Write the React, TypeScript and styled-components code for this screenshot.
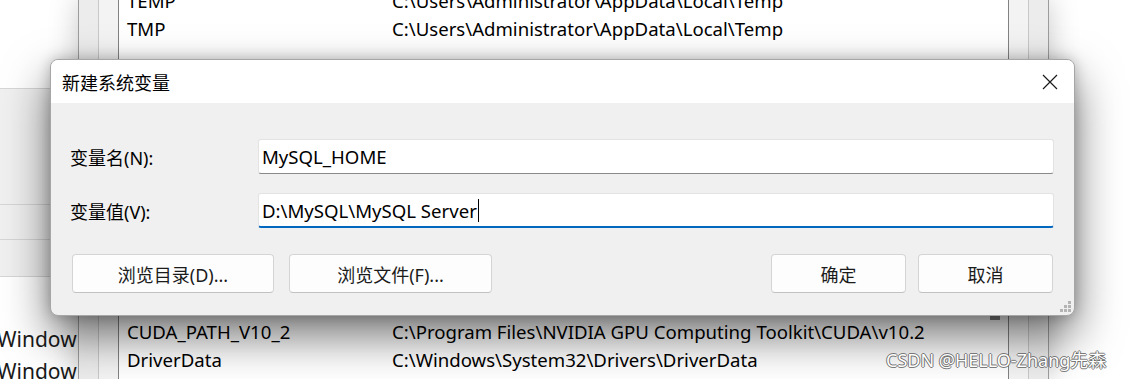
import React from 'react';
import styled, { createGlobalStyle } from 'styled-components';

const Global = createGlobalStyle`
  html, body { margin: 0; padding: 0; background: #ffffff; }
  body { font-family: "Noto Sans", "Noto Sans CJK SC", sans-serif; }
  * { box-sizing: border-box; }
`;

const Stage = styled.div`
  position: relative;
  width: 1130px;
  height: 379px;
  overflow: hidden;
  background: #ffffff;
  display: flex;
`;

/* ---------- far-left window behind ---------- */
const BackWindow = styled.div`
  width: 78px;
  flex: none;
  display: flex;
  flex-direction: column;
  background: #ffffff;
`;

const BackPane = styled.div<{ $h: number; $bg: string }>`
  height: ${p => p.$h}px;
  flex: none;
  background: ${p => p.$bg};
  border-bottom: 1px solid #d6d6d6;
`;

const BackList = styled.div`
  flex: 1;
  display: flex;
  flex-direction: column;
  justify-content: flex-end;
  margin-bottom: -8px;
`;

const BackItem = styled.div`
  height: 32px;
  line-height: 32px;
  margin-left: -3px;
  font-size: 21px;
  color: #1a1a1a;
  white-space: nowrap;
`;

/* ---------- environment window behind ---------- */
const EnvFrame = styled.div`
  width: 971px;
  flex: none;
  display: flex;
  border-left: 1px solid #9c9c9c;
  border-right: 1px solid #9c9c9c;
  box-shadow: 0 0 28px rgba(0, 0, 0, 0.22);
  background: #f0f0f0;
  z-index: 1;
`;

const Band = styled.div<{ $line?: boolean; $bg: string }>`
  width: ${p => (p.$line ? 20 : 19)}px;
  flex: none;
  background: ${p => p.$bg};
  border-right: ${p => (p.$line ? '1px solid #c8c8c8' : 'none')};
`;

const ListBox = styled.div`
  width: 891px;
  flex: none;
  display: flex;
  background: #ffffff;
  border-left: 1px solid #828282;
  border-right: 1px solid #828282;
`;

const ListRows = styled.div`
  flex: 1;
  display: flex;
  flex-direction: column;
  justify-content: space-between;
`;

const RowGroup = styled.div<{ $top?: boolean }>`
  display: flex;
  flex-direction: column;
  margin-top: ${p => (p.$top ? '-14px' : '0')};
  padding-bottom: ${p => (p.$top ? '0' : '6px')};
`;

const Row = styled.div`
  height: 28px;
  display: grid;
  grid-template-columns: 265px 1fr;
  align-items: center;
  padding-left: 8px;
  font-size: 18.6px;
  color: #000000;
  white-space: nowrap;
`;

const ScrollCol = styled.div`
  width: 22px;
  flex: none;
  display: flex;
  flex-direction: column;
  padding-left: 4px;
`;

const Thumb = styled.div`
  margin-top: auto;
  margin-bottom: 59px;
  width: 10px;
  height: 40px;
  background: #858585;
`;

/* ---------- dialog ---------- */
const Dialog = styled.div`
  position: absolute;
  left: 50px;
  top: 59px;
  width: 1025px;
  height: 257px;
  z-index: 5;
  display: flex;
  flex-direction: column;
  background: #f0f0f0;
  border: 1px solid #a6a6a6;
  border-radius: 8px;
  overflow: hidden;
  box-shadow: 0 20px 46px rgba(0, 0, 0, 0.55), 0 0 14px rgba(0, 0, 0, 0.22);
`;

const TitleBar = styled.div`
  height: 43px;
  flex: none;
  display: flex;
  align-items: center;
  background: #ffffff;
  padding-left: 11px;
`;

const Title = styled.div`
  flex: 1;
  font-size: 18px;
  color: #000000;
`;

const CloseButton = styled.div`
  width: 48px;
  height: 43px;
  display: flex;
  align-items: center;
  justify-content: center;
`;

const Body = styled.div`
  flex: 1;
  display: flex;
  flex-direction: column;
  padding: 36px 20px 0 19px;
`;

const Form = styled.div`
  display: grid;
  grid-template-columns: 188px 1fr;
  row-gap: 19px;
  align-items: center;
`;

const Label = styled.div`
  font-size: 18px;
  color: #000000;
  white-space: nowrap;
`;

const Field = styled.div<{ $focused?: boolean }>`
  height: 35px;
  display: flex;
  align-items: center;
  background: #ffffff;
  border: 1px solid #e3e3e3;
  border-bottom: ${p => (p.$focused ? '2px solid #0067c0' : '1px solid #8a8a8a')};
  border-radius: 3px;
  padding-left: 3px;
  padding-top: ${p => (p.$focused ? '1px' : '0')};
  font-size: 18.6px;
  color: #000000;
  white-space: nowrap;
`;

const Caret = styled.span`
  display: inline-block;
  width: 1px;
  height: 23px;
  margin-left: 1px;
  background: #000000;
  vertical-align: middle;
`;

const ButtonRow = styled.div`
  display: flex;
  align-items: center;
  margin-top: 26px;
  padding: 0 1px 0 2px;
`;

const ButtonGroup = styled.div<{ $gap: number }>`
  display: flex;
  gap: ${p => p.$gap}px;
`;

const Spacer = styled.div`
  flex: 1;
`;

const Button = styled.div<{ $w: number }>`
  width: ${p => p.$w}px;
  height: 39px;
  display: flex;
  align-items: center;
  justify-content: center;
  background: #fdfdfd;
  border: 1px solid #d4d4d4;
  border-bottom-color: #c2c2c2;
  border-radius: 4px;
  font-size: 18px;
  color: #1b1b1b;
  white-space: nowrap;
`;

const Grip = styled.svg`
  position: absolute;
  right: 2px;
  bottom: 2px;
`;

const Watermark = styled.div`
  position: absolute;
  left: 886px;
  top: 346px;
  z-index: 6;
  font-size: 18px;
  color: #ffffff;
  white-space: nowrap;
  text-shadow: 1px 0 0 rgba(90, 90, 90, 0.8), -1px 0 0 rgba(90, 90, 90, 0.8),
    0 1px 0 rgba(90, 90, 90, 0.8), 0 -1px 0 rgba(90, 90, 90, 0.8);
`;

const CloseIcon = () => (
  <svg width="16" height="16" viewBox="0 0 16 16">
    <path d="M1 1 L15 15 M15 1 L1 15" stroke="#1a1a1a" strokeWidth="1.2" fill="none" />
  </svg>
);

const GripIcon = () => (
  <Grip width="14" height="14" viewBox="0 0 14 14">
    {[
      [10, 0],
      [6, 4],
      [10, 4],
      [2, 8],
      [6, 8],
      [10, 8],
    ].map(([x, y], i) => (
      <rect key={i} x={x} y={y + 2} width="3" height="3" fill="#b4b4b4" />
    ))}
  </Grip>
);

export default function App() {
  return (
    <>
      <Global />
      <Stage>
        <BackWindow>
          <BackPane $h={89} $bg="#ffffff" />
          <BackPane $h={116} $bg="#f0f0f0" />
          <BackPane $h={35} $bg="#f0f0f0" />
          <BackPane $h={37} $bg="#f0f0f0" />
          <BackList>
            <BackItem>Window</BackItem>
            <BackItem>Window</BackItem>
          </BackList>
        </BackWindow>

        <EnvFrame>
          <Band $line $bg="#ececec" />
          <Band $bg="#f3f3f3" />
          <ListBox>
            <ListRows>
              <RowGroup $top>
                <Row>
                  <span>TEMP</span>
                  <span>C:\Users\Administrator\AppData\Local\Temp</span>
                </Row>
                <Row>
                  <span>TMP</span>
                  <span>C:\Users\Administrator\AppData\Local\Temp</span>
                </Row>
              </RowGroup>
              <RowGroup>
                <Row>
                  <span>CUDA_PATH_V10_2</span>
                  <span>C:\Program Files\NVIDIA GPU Computing Toolkit\CUDA\v10.2</span>
                </Row>
                <Row>
                  <span>DriverData</span>
                  <span>C:\Windows\System32\Drivers\DriverData</span>
                </Row>
              </RowGroup>
            </ListRows>
            <ScrollCol>
              <Thumb />
            </ScrollCol>
          </ListBox>
          <Band $line $bg="#f3f3f3" />
          <Band $bg="#ececec" />
        </EnvFrame>

        <Dialog>
          <TitleBar>
            <Title>新建系统变量</Title>
            <CloseButton>
              <CloseIcon />
            </CloseButton>
          </TitleBar>
          <Body>
            <Form>
              <Label>变量名(N):</Label>
              <Field>MySQL_HOME</Field>
              <Label>变量值(V):</Label>
              <Field $focused>
                D:\MySQL\MySQL Server
                <Caret />
              </Field>
            </Form>
            <ButtonRow>
              <ButtonGroup $gap={15}>
                <Button $w={202}>浏览目录(D)...</Button>
                <Button $w={203}>浏览文件(F)...</Button>
              </ButtonGroup>
              <Spacer />
              <ButtonGroup $gap={12}>
                <Button $w={135}>确定</Button>
                <Button $w={135}>取消</Button>
              </ButtonGroup>
            </ButtonRow>
          </Body>
          <GripIcon />
        </Dialog>

        <Watermark>CSDN @HELLO-Zhang先森</Watermark>
      </Stage>
    </>
  );
}
